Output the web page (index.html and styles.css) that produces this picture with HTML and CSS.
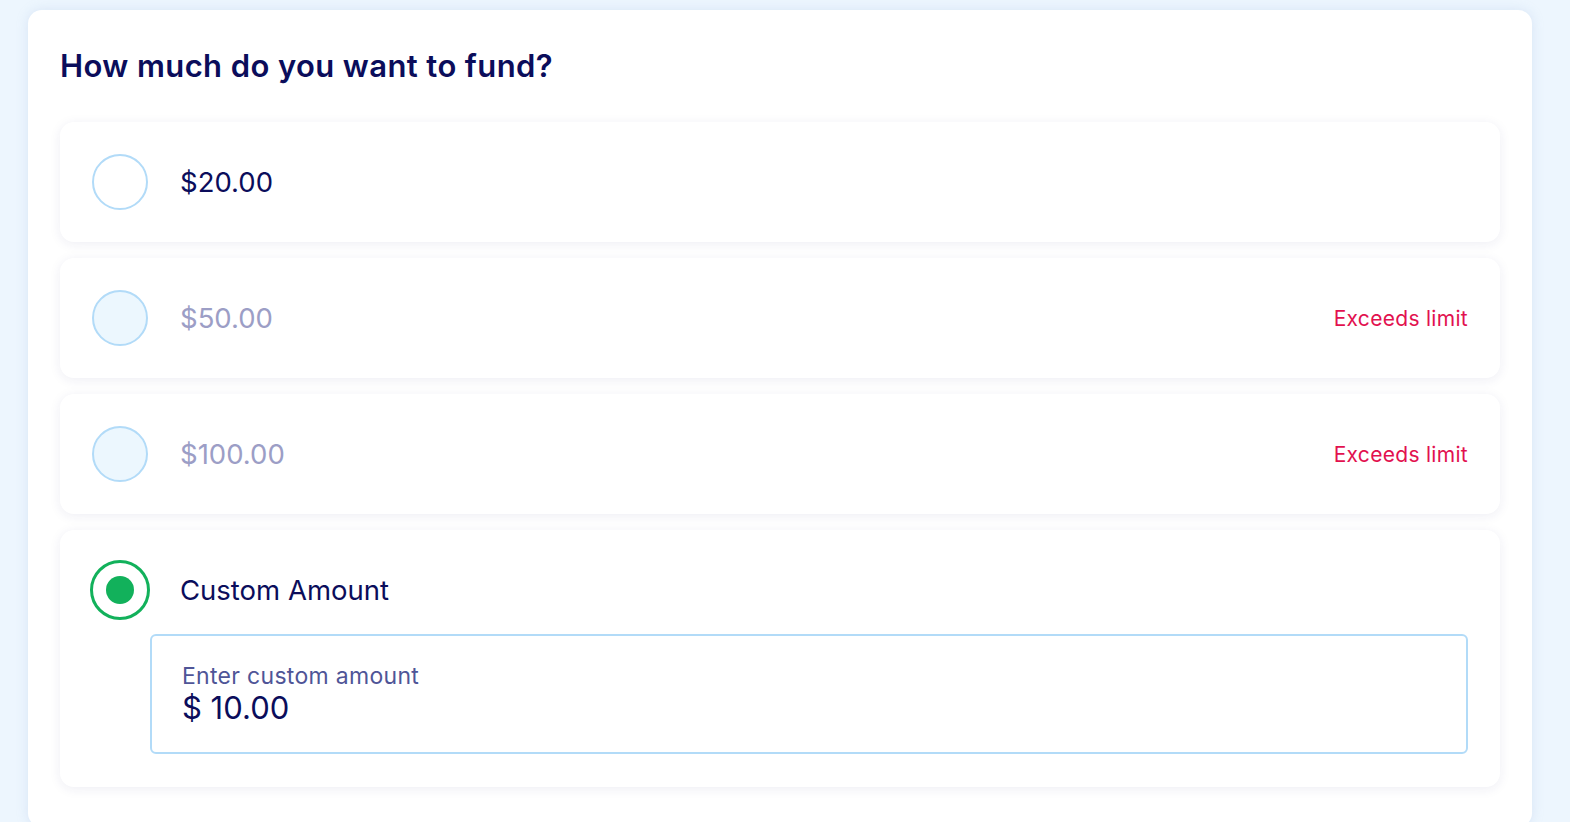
FILE: index.html
```html
<!DOCTYPE html>
<html lang="en">
<head>
    <meta charset="UTF-8">
    <meta name="viewport" content="width=device-width, initial-scale=1.0">
    <title>Fund Amount</title>
    <link rel="stylesheet" href="styles.css">
</head>
<body>

    <div class="panel">
        <h2>How much do you want to fund?</h2>

        <div class="options">
            <!-- $20 -->
            <label class="option">
                <span class="radio"></span>
                <span class="amount">$20.00</span>
            </label>

            <!-- $50 -->
            <div class="option disabled">
                <span class="radio"></span>
                <span class="amount">$50.00</span>
                <span class="limit">Exceeds limit</span>
            </div>

            <!-- $100 -->
            <div class="option disabled">
                <span class="radio"></span>
                <span class="amount">$100.00</span>
                <span class="limit">Exceeds limit</span>
            </div>

            <!-- Custom -->
            <div class="option custom">
                <div class="custom-row">
                    <span class="radio checked"></span>
                    <span class="amount">Custom Amount</span>
                </div>
                <div class="custom-input">
                    <span class="input-label">Enter custom amount</span>
                    <span class="input-value">$ 10.00</span>
                </div>
            </div>
        </div>
    </div>

</body>
</html>
```

FILE: styles.css
```css
:root {
    --page-bg: #EDF6FE;
    --navy: #0B0D5B;
    --muted: #9C9EC6;
    --radio-border: #B2DBF8;
    --radio-fill: #ECF7FE;
    --green: #12B15B;
    --red: #E2114F;
    --label: #4F5597;
}

body {
    margin: 0;
    padding: 10px 38px 0 28px;
    background-color: var(--page-bg);
    font-family: Inter, Roboto, sans-serif;
    color: var(--navy);
    height: 812px;
    overflow: hidden;
}

.panel {
    background-color: #fff;
    border-radius: 14px;
    padding: 38px 32px 40px 32px;
    box-shadow: 0 0 12px rgba(150, 180, 220, 0.25);
}

h2 {
    margin: 0 0 38px 0;
    font-size: 31px;
    line-height: 36px;
    font-weight: 600;
    letter-spacing: 0.4px;
    color: var(--navy);
}

.options {
    display: flex;
    flex-direction: column;
    gap: 16px;
}

.option {
    display: flex;
    align-items: center;
    height: 120px;
    box-sizing: border-box;
    padding: 0 32px;
    background-color: #fff;
    border-radius: 14px;
    box-shadow: 0 2px 12px rgba(40, 40, 110, 0.08);
}

.radio {
    width: 56px;
    height: 56px;
    box-sizing: border-box;
    border: 2px solid var(--radio-border);
    border-radius: 50%;
    flex-shrink: 0;
}

.amount {
    margin-left: 32px;
    font-size: 27.5px;
    color: var(--navy);
}

.disabled .radio {
    background-color: var(--radio-fill);
}

.disabled .amount {
    color: var(--muted);
}

.limit {
    margin-left: auto;
    font-size: 21px;
    letter-spacing: 0.3px;
    color: var(--red);
}

.custom {
    flex-direction: column;
    align-items: stretch;
    height: auto;
    padding: 30px 32px 33px 30px;
}

.custom-row {
    display: flex;
    align-items: center;
}

.radio.checked {
    width: 60px;
    height: 60px;
    border: 3px solid var(--green);
    position: relative;
}

.radio.checked::after {
    content: "";
    position: absolute;
    left: 13px;
    top: 13px;
    width: 28px;
    height: 28px;
    border-radius: 50%;
    background-color: var(--green);
}

.custom .amount {
    margin-left: 30px;
}

.custom-input {
    margin: 14px 0 0 60px;
    height: 120px;
    box-sizing: border-box;
    border: 2px solid var(--radio-border);
    border-radius: 6px;
    padding: 26px 30px 0 30px;
    display: flex;
    flex-direction: column;
}

.input-label {
    font-size: 23px;
    line-height: 28px;
    letter-spacing: 0.3px;
    color: var(--label);
}

.input-value {
    font-size: 31px;
    line-height: 36px;
    color: var(--navy);
}
```
